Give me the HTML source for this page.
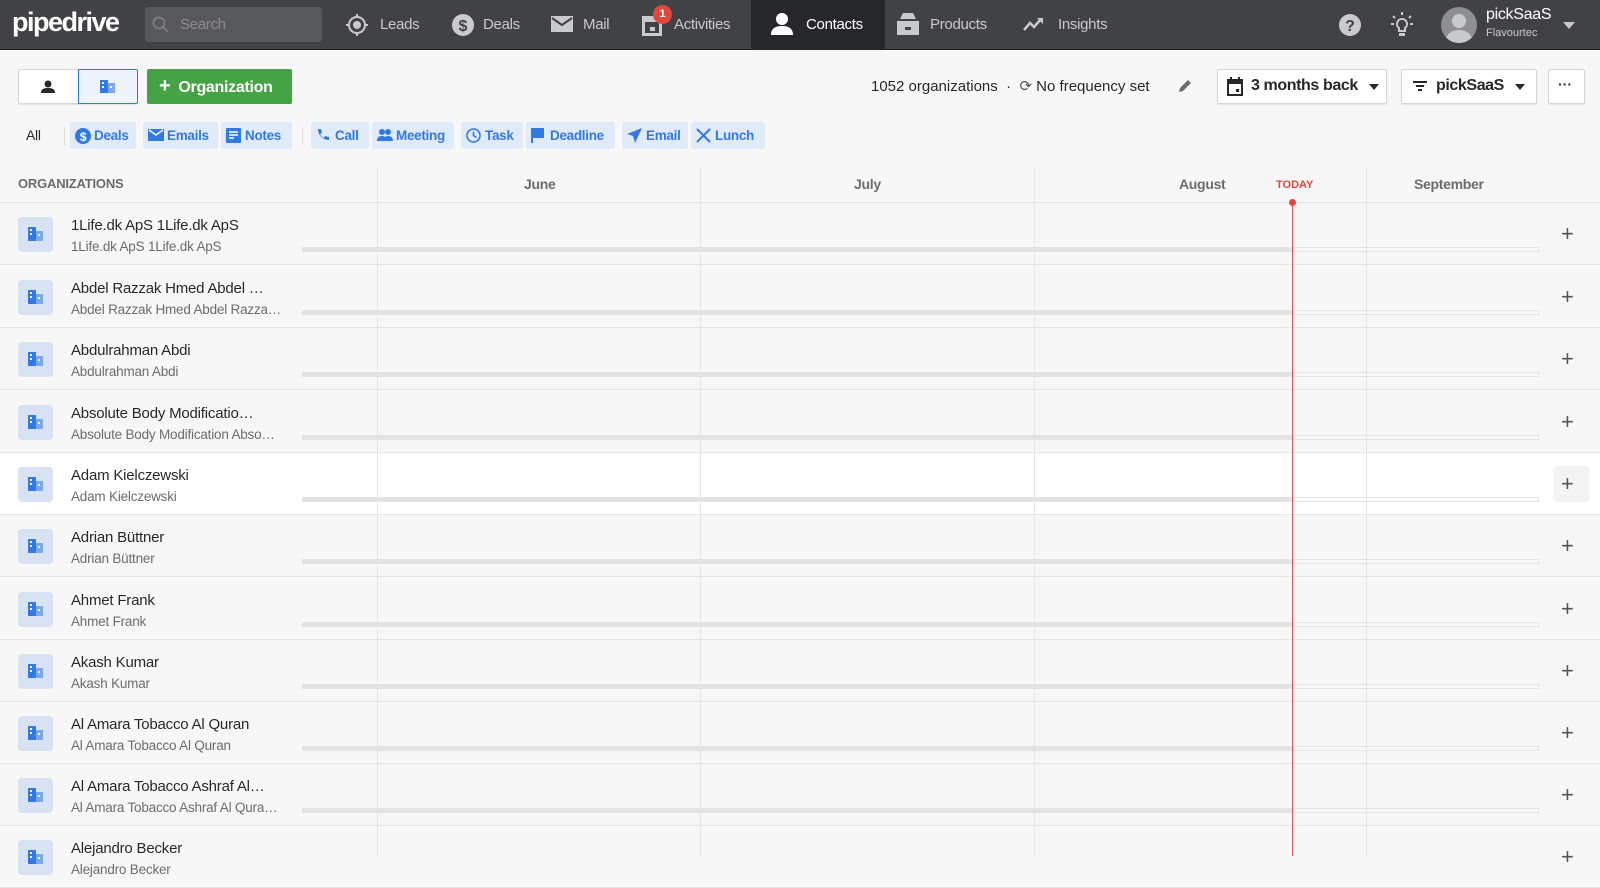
<!DOCTYPE html>
<html><head><meta charset="utf-8"><style>
*{box-sizing:border-box;margin:0;padding:0}
body{width:1600px;height:856px;overflow:hidden;background:#f7f7f7;font-family:"Liberation Sans",sans-serif;color:#26292c;position:relative}
.a{position:absolute}
.nav{left:0;top:0;width:1600px;height:50px;background:#414246;border-bottom:1px solid #222}
.nt{color:#c9cacc;font-size:15px;top:16px;letter-spacing:-0.3px}
.chip{position:absolute;top:122px;height:27px;background:#e1eaf8;border-radius:3px;color:#317ae2;font-size:13.5px;font-weight:bold;line-height:27px;padding-left:24px;letter-spacing:-0.3px}
.chip svg{position:absolute;left:5px;top:6px}
.btn{position:absolute;top:69px;height:35px;background:#fff;border:1px solid #d5d6d7;border-radius:2px;box-shadow:0 1px 1px rgba(0,0,0,.08)}
.row{position:absolute;left:0;width:1600px;height:62px;border-bottom:1px solid #e5e5e5}
.ic{position:absolute;left:18px;top:14px;width:35px;height:35px;background:#d8e2f2;border-radius:4px}
.ic svg{position:absolute;left:10px;top:10px}
.n1{position:absolute;left:71px;top:14px;font-size:15px;letter-spacing:-0.2px;white-space:nowrap}
.n2{position:absolute;left:71px;top:36px;font-size:13.5px;color:#6a6c6f;letter-spacing:-0.2px;white-space:nowrap}
.bar{position:absolute;left:302px;top:44px;width:991px;height:5px;background:#e3e3e3}
.bar2{position:absolute;left:1293px;top:44px;width:246px;height:5px;border:1px solid #e3e3e3}
.pl{position:absolute;left:1561px;top:20px;font-size:22px;color:#555;line-height:22px}
.vl{position:absolute;top:167px;width:1px;height:689px;background:#e5e5e5}
.mh{position:absolute;top:176px;font-size:14px;color:#6a6c6f;font-weight:bold;letter-spacing:-0.3px}
</style></head><body>
<div class="a nav"></div>
<div class="a" style="left:12px;top:7px;color:#fff;font-size:27px;font-weight:bold;letter-spacing:-1.5px">pipedrive</div>
<div class="a" style="left:145px;top:7px;width:177px;height:35px;background:#57585c;border-radius:3px"></div>
<svg class="a" style="left:152px;top:16px" width="18" height="18"><circle cx="7" cy="7" r="5.5" fill="none" stroke="#7b7c80" stroke-width="2"/><path d="M11 11l5 5" stroke="#7b7c80" stroke-width="2"/></svg>
<div class="a nt" style="left:180px;color:#8b8c90">Search</div>
<svg class="a" style="left:345px;top:13px" width="24" height="24"><circle cx="12" cy="12" r="8" fill="none" stroke="#c9cacc" stroke-width="2"/><circle cx="12" cy="12" r="4" fill="#c9cacc"/><path d="M12 1v4M12 19v4M1 12h4M19 12h4" stroke="#c9cacc" stroke-width="2"/></svg>
<div class="a nt" style="left:380px">Leads</div>
<svg class="a" style="left:451px;top:13px" width="24" height="24"><circle cx="12" cy="12" r="11" fill="#c9cacc"/><text x="12" y="18" text-anchor="middle" font-size="16" font-weight="bold" fill="#414246" font-family="Liberation Sans">$</text></svg>
<div class="a nt" style="left:483px">Deals</div>
<svg class="a" style="left:550px;top:14px" width="24" height="20"><rect x="1" y="2" width="22" height="16" fill="#c9cacc"/><path d="M2 4l10 7 10-7" stroke="#414246" stroke-width="2" fill="none"/></svg>
<div class="a nt" style="left:583px">Mail</div>
<svg class="a" style="left:641px;top:12px" width="22" height="26"><rect x="1" y="4" width="20" height="20" fill="#c9cacc"/><rect x="4" y="10" width="14" height="11" fill="#414246"/><rect x="9" y="15" width="5" height="4" fill="#c9cacc"/></svg>
<div class="a" style="left:653px;top:5px;width:19px;height:19px;border-radius:50%;background:#e0473e;color:#fff;font-size:11px;font-weight:bold;text-align:center;line-height:19px">1</div>
<div class="a nt" style="left:674px">Activities</div>
<div class="a" style="left:751px;top:0;width:134px;height:50px;background:#26282b"></div>
<svg class="a" style="left:770px;top:12px" width="24" height="24"><circle cx="12" cy="7" r="6" fill="#fff"/><path d="M1 23c0-7 5-9 11-9s11 2 11 9z" fill="#fff"/></svg>
<div class="a nt" style="left:806px;color:#fff">Contacts</div>
<svg class="a" style="left:896px;top:12px" width="24" height="24"><rect x="1" y="8" width="22" height="15" fill="#c9cacc"/><path d="M4 7l3-6h10l3 6z" fill="#c9cacc"/><rect x="1" y="7" width="22" height="2" fill="#414246"/><rect x="9" y="15" width="6" height="3" fill="#414246"/></svg>
<div class="a nt" style="left:930px">Products</div>
<svg class="a" style="left:1023px;top:16px" width="22" height="16"><path d="M1 14l6-7 4 4 7-8" stroke="#c9cacc" stroke-width="2.5" fill="none"/><path d="M14 2h6v6z" fill="#c9cacc"/></svg>
<div class="a nt" style="left:1058px">Insights</div>
<svg class="a" style="left:1338px;top:13px" width="24" height="24"><circle cx="12" cy="12" r="11" fill="#c9cacc"/><text x="12" y="18" text-anchor="middle" font-size="16" font-weight="bold" fill="#414246" font-family="Liberation Sans">?</text></svg>
<svg class="a" style="left:1390px;top:11px" width="24" height="28"><path d="M12 1v3M3 5l2 2M21 5l-2 2M1 13h3M20 13h3" stroke="#c9cacc" stroke-width="2"/><path d="M12 8a5 5 0 00-3 9v3h6v-3a5 5 0 00-3-9z" fill="none" stroke="#c9cacc" stroke-width="2"/><rect x="9" y="22" width="6" height="3" fill="#c9cacc"/></svg>
<div class="a" style="left:1441px;top:7px;width:36px;height:36px;border-radius:50%;background:#8e8f92;overflow:hidden"><div class="a" style="left:11px;top:7px;width:14px;height:14px;border-radius:50%;background:#c9cacc"></div><div class="a" style="left:5px;top:23px;width:26px;height:20px;border-radius:50%;background:#c9cacc"></div></div>
<div class="a" style="left:1486px;top:6px;color:#fff;font-size:16px;letter-spacing:-0.3px">pickSaaS</div>
<div class="a" style="left:1486px;top:27px;color:#c9cacc;font-size:11px">Flavourtec</div>
<svg class="a" style="left:1563px;top:22px" width="12" height="7"><path d="M0 0h12L6 7z" fill="#c9cacc"/></svg>

<div class="btn" style="left:18px;width:61px;border-radius:2px 0 0 2px"></div>
<svg class="a" style="left:41px;top:80px" width="14" height="13"><circle cx="7" cy="4" r="3.5" fill="#26292c"/><path d="M0 13c0-4 3-5 7-5s7 1 7 5z" fill="#26292c"/></svg>
<div class="btn" style="left:78px;width:60px;background:#eef3fc;border-color:#317ae2;border-radius:0 2px 2px 0"></div>
<svg class="a" style="left:100px;top:80px" width="15" height="13"><rect x="0" y="0" width="8" height="13" fill="#317ae2"/><rect x="8" y="3" width="7" height="10" fill="#7aa6ee"/><rect x="2" y="2" width="2" height="2" fill="#fff"/><rect x="2" y="6" width="2" height="2" fill="#fff"/><rect x="10" y="6" width="2" height="2" fill="#fff"/></svg>
<div class="a" style="left:147px;top:69px;width:145px;height:35px;background:#45a245;border-radius:2px;color:#fff;font-size:16px;font-weight:bold;line-height:35px;padding-left:12px;letter-spacing:-0.3px"><span style="font-size:20px;margin-right:8px">+</span>Organization</div>

<div class="a" style="left:871px;top:77px;font-size:15px;letter-spacing:0px;white-space:nowrap">1052 organizations &nbsp;·&nbsp; <span style="color:#555">⟳</span> No frequency set</div>
<svg class="a" style="left:1177px;top:78px" width="16" height="16"><path d="M2 14l1-4 8-8 3 3-8 8z" fill="#6a6c6f"/></svg>
<div class="btn" style="left:1217px;width:170px"></div>
<svg class="a" style="left:1227px;top:77px" width="16" height="19"><rect x="1" y="3" width="14" height="15" fill="none" stroke="#26292c" stroke-width="2"/><rect x="1" y="3" width="14" height="4" fill="#26292c"/><path d="M4 0v4M12 0v4" stroke="#26292c" stroke-width="2"/><rect x="9" y="12" width="3" height="3" fill="#26292c"/></svg>
<div class="a" style="left:1251px;top:77px;font-size:16px;font-weight:bold;letter-spacing:-0.4px">3 months back</div>
<svg class="a" style="left:1369px;top:84px" width="10" height="6"><path d="M0 0h10L5 6z" fill="#26292c"/></svg>
<div class="btn" style="left:1401px;width:136px"></div>
<svg class="a" style="left:1413px;top:81px" width="14" height="11"><path d="M0 1h14M3 5h8M5 9h4" stroke="#26292c" stroke-width="2"/></svg>
<div class="a" style="left:1436px;top:77px;font-size:16px;font-weight:bold;letter-spacing:-0.4px">pickSaaS</div>
<svg class="a" style="left:1515px;top:84px" width="10" height="6"><path d="M0 0h10L5 6z" fill="#26292c"/></svg>
<div class="btn" style="left:1548px;width:37px"></div>
<div class="a" style="left:1558px;top:76px;font-size:14px;font-weight:bold">···</div>

<div class="a" style="left:26px;top:127px;font-size:14px;letter-spacing:-0.3px">All</div>
<div class="a" style="left:64px;top:127px;width:1px;height:18px;background:#ddd"></div>
<div class="chip" style="left:70px;width:66px"><svg width="16" height="16"><circle cx="8" cy="8" r="8" fill="#317ae2"/><text x="8" y="13" text-anchor="middle" font-size="12" font-weight="bold" fill="#fff" font-family="Liberation Sans">$</text></svg>Deals</div>
<div class="chip" style="left:143px;width:75px"><svg width="16" height="14"><rect x="0" y="1" width="16" height="12" fill="#317ae2"/><path d="M1 2l7 5 7-5" stroke="#fff" stroke-width="1.5" fill="none"/></svg>Emails</div>
<div class="chip" style="left:221px;width:71px"><svg width="15" height="15"><rect x="0" y="0" width="15" height="15" fill="#317ae2" rx="1"/><path d="M3 4h9M3 7h9M3 10h5" stroke="#fff" stroke-width="1.5"/></svg>Notes</div>
<div class="a" style="left:302px;top:127px;width:1px;height:18px;background:#ddd"></div>
<div class="chip" style="left:311px;width:58px"><svg width="14" height="14"><path d="M2 1l3 0 1 4-2 1c1 2 2 3 4 4l1-2 4 1v3c-6 0-11-5-11-11z" fill="#317ae2"/></svg>Call</div>
<div class="chip" style="left:372px;width:82px"><svg width="16" height="14"><circle cx="5" cy="4" r="3" fill="#317ae2"/><circle cx="11" cy="4" r="3" fill="#317ae2"/><path d="M0 13c0-4 2-5 5-5s5 1 5 5zM8 13c0-4 1-5 3-5s5 1 5 5z" fill="#317ae2"/></svg>Meeting</div>
<div class="chip" style="left:461px;width:62px"><svg width="15" height="15"><circle cx="7.5" cy="7.5" r="6.5" fill="none" stroke="#317ae2" stroke-width="1.6"/><path d="M7.5 3.5v4l3 2" stroke="#317ae2" stroke-width="1.6" fill="none"/></svg>Task</div>
<div class="chip" style="left:526px;width:89px"><svg width="14" height="15"><path d="M1 0v15M1 1h11v8H1" stroke="#317ae2" stroke-width="2" fill="#317ae2"/></svg>Deadline</div>
<div class="chip" style="left:622px;width:66px"><svg width="15" height="15"><path d="M15 0L0 6l6 2 2 7z" fill="#317ae2"/></svg>Email</div>
<div class="chip" style="left:691px;width:74px"><svg width="15" height="15"><path d="M1 1l13 13M14 1L1 14" stroke="#317ae2" stroke-width="2"/></svg>Lunch</div>

<div class="a" style="left:0;top:202px;width:1600px;height:1px;background:#e5e5e5"></div>
<div class="a" style="left:18px;top:176px;font-size:13px;color:#6a6c6f;font-weight:bold;letter-spacing:-0.2px">ORGANIZATIONS</div>

<div class="row" style="top:453px;background:#fff"></div>
<div class="a" style="left:1553px;top:466px;width:36px;height:36px;background:#f4f4f4;border-radius:4px"></div>

<div class="vl" style="left:377px"></div><div class="vl" style="left:700px"></div><div class="vl" style="left:1034px"></div><div class="vl" style="left:1366px"></div>
<div class="mh" style="left:524px">June</div>
<div class="mh" style="left:854px">July</div>
<div class="mh" style="left:1179px">August</div>
<div class="mh" style="left:1414px">September</div>
<div class="a" style="left:1276px;top:179px;font-size:11px;color:#e0473e;font-weight:bold">TODAY</div>

<div class="row" style="top:203px"><div class="ic"><svg width="15" height="14"><rect x="0" y="0" width="8" height="14" fill="#317ae2"/><rect x="8" y="4" width="7" height="10" fill="#7aa6ee"/><rect x="2" y="2" width="2" height="2" fill="#fff"/><rect x="2" y="6" width="2" height="2" fill="#fff"/><rect x="10" y="7" width="2" height="2" fill="#fff"/></svg></div><div class="n1">1Life.dk ApS 1Life.dk ApS</div><div class="n2">1Life.dk ApS 1Life.dk ApS</div><div class="bar"></div><div class="bar2"></div><div class="pl">+</div></div>
<div class="row" style="top:266px"><div class="ic"><svg width="15" height="14"><rect x="0" y="0" width="8" height="14" fill="#317ae2"/><rect x="8" y="4" width="7" height="10" fill="#7aa6ee"/><rect x="2" y="2" width="2" height="2" fill="#fff"/><rect x="2" y="6" width="2" height="2" fill="#fff"/><rect x="10" y="7" width="2" height="2" fill="#fff"/></svg></div><div class="n1">Abdel Razzak Hmed Abdel …</div><div class="n2">Abdel Razzak Hmed Abdel Razza…</div><div class="bar"></div><div class="bar2"></div><div class="pl">+</div></div>
<div class="row" style="top:328px"><div class="ic"><svg width="15" height="14"><rect x="0" y="0" width="8" height="14" fill="#317ae2"/><rect x="8" y="4" width="7" height="10" fill="#7aa6ee"/><rect x="2" y="2" width="2" height="2" fill="#fff"/><rect x="2" y="6" width="2" height="2" fill="#fff"/><rect x="10" y="7" width="2" height="2" fill="#fff"/></svg></div><div class="n1">Abdulrahman Abdi</div><div class="n2">Abdulrahman Abdi</div><div class="bar"></div><div class="bar2"></div><div class="pl">+</div></div>
<div class="row" style="top:391px"><div class="ic"><svg width="15" height="14"><rect x="0" y="0" width="8" height="14" fill="#317ae2"/><rect x="8" y="4" width="7" height="10" fill="#7aa6ee"/><rect x="2" y="2" width="2" height="2" fill="#fff"/><rect x="2" y="6" width="2" height="2" fill="#fff"/><rect x="10" y="7" width="2" height="2" fill="#fff"/></svg></div><div class="n1">Absolute Body Modificatio…</div><div class="n2">Absolute Body Modification Abso…</div><div class="bar"></div><div class="bar2"></div><div class="pl">+</div></div>
<div class="row" style="top:453px"><div class="ic"><svg width="15" height="14"><rect x="0" y="0" width="8" height="14" fill="#317ae2"/><rect x="8" y="4" width="7" height="10" fill="#7aa6ee"/><rect x="2" y="2" width="2" height="2" fill="#fff"/><rect x="2" y="6" width="2" height="2" fill="#fff"/><rect x="10" y="7" width="2" height="2" fill="#fff"/></svg></div><div class="n1">Adam Kielczewski</div><div class="n2">Adam Kielczewski</div><div class="bar"></div><div class="bar2"></div><div class="pl">+</div></div>
<div class="row" style="top:515px"><div class="ic"><svg width="15" height="14"><rect x="0" y="0" width="8" height="14" fill="#317ae2"/><rect x="8" y="4" width="7" height="10" fill="#7aa6ee"/><rect x="2" y="2" width="2" height="2" fill="#fff"/><rect x="2" y="6" width="2" height="2" fill="#fff"/><rect x="10" y="7" width="2" height="2" fill="#fff"/></svg></div><div class="n1">Adrian Büttner</div><div class="n2">Adrian Büttner</div><div class="bar"></div><div class="bar2"></div><div class="pl">+</div></div>
<div class="row" style="top:578px"><div class="ic"><svg width="15" height="14"><rect x="0" y="0" width="8" height="14" fill="#317ae2"/><rect x="8" y="4" width="7" height="10" fill="#7aa6ee"/><rect x="2" y="2" width="2" height="2" fill="#fff"/><rect x="2" y="6" width="2" height="2" fill="#fff"/><rect x="10" y="7" width="2" height="2" fill="#fff"/></svg></div><div class="n1">Ahmet Frank</div><div class="n2">Ahmet Frank</div><div class="bar"></div><div class="bar2"></div><div class="pl">+</div></div>
<div class="row" style="top:640px"><div class="ic"><svg width="15" height="14"><rect x="0" y="0" width="8" height="14" fill="#317ae2"/><rect x="8" y="4" width="7" height="10" fill="#7aa6ee"/><rect x="2" y="2" width="2" height="2" fill="#fff"/><rect x="2" y="6" width="2" height="2" fill="#fff"/><rect x="10" y="7" width="2" height="2" fill="#fff"/></svg></div><div class="n1">Akash Kumar</div><div class="n2">Akash Kumar</div><div class="bar"></div><div class="bar2"></div><div class="pl">+</div></div>
<div class="row" style="top:702px"><div class="ic"><svg width="15" height="14"><rect x="0" y="0" width="8" height="14" fill="#317ae2"/><rect x="8" y="4" width="7" height="10" fill="#7aa6ee"/><rect x="2" y="2" width="2" height="2" fill="#fff"/><rect x="2" y="6" width="2" height="2" fill="#fff"/><rect x="10" y="7" width="2" height="2" fill="#fff"/></svg></div><div class="n1">Al Amara Tobacco Al Quran</div><div class="n2">Al Amara Tobacco Al Quran</div><div class="bar"></div><div class="bar2"></div><div class="pl">+</div></div>
<div class="row" style="top:764px"><div class="ic"><svg width="15" height="14"><rect x="0" y="0" width="8" height="14" fill="#317ae2"/><rect x="8" y="4" width="7" height="10" fill="#7aa6ee"/><rect x="2" y="2" width="2" height="2" fill="#fff"/><rect x="2" y="6" width="2" height="2" fill="#fff"/><rect x="10" y="7" width="2" height="2" fill="#fff"/></svg></div><div class="n1">Al Amara Tobacco Ashraf Al…</div><div class="n2">Al Amara Tobacco Ashraf Al Qura…</div><div class="bar"></div><div class="bar2"></div><div class="pl">+</div></div>
<div class="row" style="top:826px"><div class="ic"><svg width="15" height="14"><rect x="0" y="0" width="8" height="14" fill="#317ae2"/><rect x="8" y="4" width="7" height="10" fill="#7aa6ee"/><rect x="2" y="2" width="2" height="2" fill="#fff"/><rect x="2" y="6" width="2" height="2" fill="#fff"/><rect x="10" y="7" width="2" height="2" fill="#fff"/></svg></div><div class="n1">Alejandro Becker</div><div class="n2">Alejandro Becker</div><div class="pl">+</div></div>

<div class="a" style="left:1292px;top:203px;width:1px;height:653px;background:#e8594f"></div>
<div class="a" style="left:1289px;top:199px;width:7px;height:7px;border-radius:50%;background:#e0473e"></div>
</body></html>
